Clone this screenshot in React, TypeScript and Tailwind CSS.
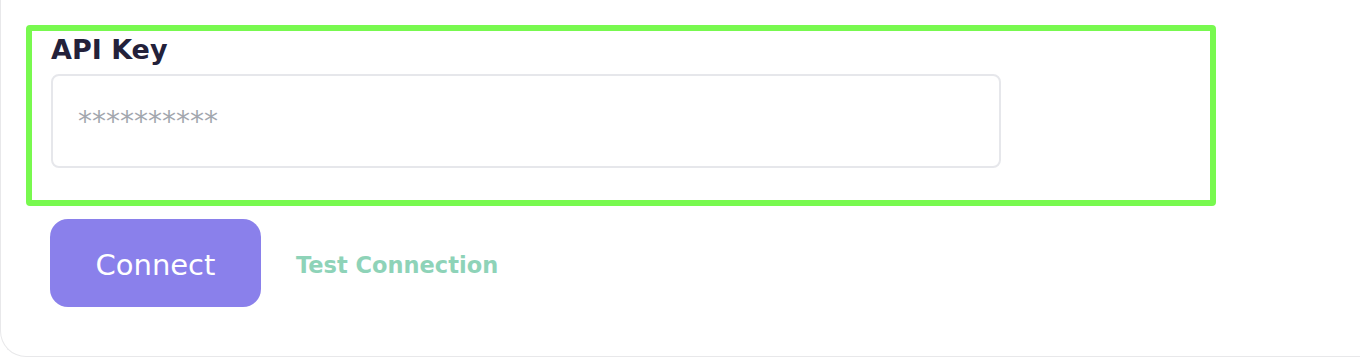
import React from 'react';

const font = { fontFamily: '"DejaVu Sans", Verdana, sans-serif' };

export default function App() {
  return (
    <div className="h-[358px] w-[1360px] overflow-hidden bg-white" style={font}>
      {/* card, top and right edges run off the frame */}
      <div className="w-[1400px] rounded-bl-[26px] border-b border-l border-[#e8e8ea] bg-white pl-[49px] pt-[25px] pb-[49px]">
        {/* highlighted field group */}
        <div className="-ml-[24px] w-[1190px] rounded-[4px] border-[6px] border-[#78f94f] px-[19px] pb-[32px]">
          <label className="block pt-[2px] text-[27px] leading-[34px] font-bold text-[#23213a]">
            API Key
          </label>
          <input
            type="password"
            placeholder="**********"
            className="mt-[7px] block h-[94px] w-[950px] rounded-[8px] border-2 border-[#e6e7eb] bg-white px-[25px] text-[28px] text-[#23213a] placeholder-[#a3a7af] outline-none"
            style={font}
          />
        </div>

        <div className="mt-[13px] flex items-center gap-[35px]">
          <button
            className="h-[88px] w-[211px] rounded-[18px] bg-[#8a80eb] pt-[6px] text-[29px] font-normal text-white"
            style={font}
          >
            Connect
          </button>
          <button className="pt-[6px] text-[22.5px] font-bold text-[#8ed3b8]" style={font}>
            Test Connection
          </button>
        </div>
      </div>
    </div>
  );
}
